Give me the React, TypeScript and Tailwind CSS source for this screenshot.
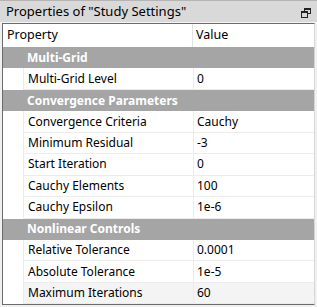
import React from "react";

type Row = { cat?: string; label?: string; value?: string; sel?: boolean };

const rows: Row[] = [
  { cat: "Multi-Grid" },
  { label: "Multi-Grid Level", value: "0" },
  { cat: "Convergence Parameters" },
  { label: "Convergence Criteria", value: "Cauchy" },
  { label: "Minimum Residual", value: "-3" },
  { label: "Start Iteration", value: "0" },
  { label: "Cauchy Elements", value: "100" },
  { label: "Cauchy Epsilon", value: "1e-6" },
  { cat: "Nonlinear Controls" },
  { label: "Relative Tolerance", value: "0.0001" },
  { label: "Absolute Tolerance", value: "1e-5" },
  { label: "Maximum Iterations", value: "60", sel: true },
];

export default function App() {
  return (
    <div
      className="w-[317px] h-[307px] bg-[#f0f0f0] flex flex-col overflow-hidden text-black"
      style={{ fontFamily: '"Noto Sans", "Noto Sans CJK SC", sans-serif' }}
    >
      <div className="h-[22px] shrink-0 bg-[#d9d9d9] border-t border-[#b4b4b4] flex items-center justify-between pl-[6px] pr-[6px]">
        <span className="text-[13px] leading-none">Properties of "Study Settings"</span>
        <svg width="10" height="10" viewBox="0 0 10 10" className="mt-[2px]">
          <rect x="3.5" y="0.5" width="6" height="5" fill="none" stroke="#222" />
          <rect x="3" y="0" width="7" height="2" fill="#222" />
          <rect x="0.5" y="3.5" width="6" height="6" fill="#d9d9d9" stroke="#222" />
          <rect x="0" y="3" width="7" height="2" fill="#222" />
        </svg>
      </div>
      <div className="h-px shrink-0 bg-[#f4f4f4]" />
      <div className="flex-1 ml-[2px] mr-[2px] mb-[2px] bg-white border-t border-l border-b border-[#6b6b6b] border-r border-r-[#d6d6d6] flex flex-col">
        <div className="h-[23px] shrink-0 flex items-center text-[12.5px]">
          <div className="w-[190px] h-full flex items-center pl-[4px] border-r border-[#e3e3e3]">Property</div>
          <div className="flex-1 pl-[3px]">Value</div>
        </div>
        {rows.map((r, i) =>
          r.cat ? (
            <div
              key={i}
              className="h-[21.45px] shrink-0 bg-[#a5a5a5] flex items-center pl-[24px] text-[12px] font-bold text-white"
            >
              {r.cat}
            </div>
          ) : (
            <div key={i} className="h-[21.45px] shrink-0 flex text-[12px]">
              <div className="w-[20px] bg-white" />
              <div
                className={`flex-1 flex border-b border-l border-[#ececec] ${r.sel ? "bg-[#f4f4f4]" : "bg-white"}`}
              >
                <div className="w-[170px] flex items-center pl-[4px] border-r border-[#ececec]">{r.label}</div>
                <div className="flex-1 flex items-center pl-[3px]">{r.value}</div>
              </div>
            </div>
          )
        )}
        <div className="flex-1 bg-white" />
      </div>
    </div>
  );
}
